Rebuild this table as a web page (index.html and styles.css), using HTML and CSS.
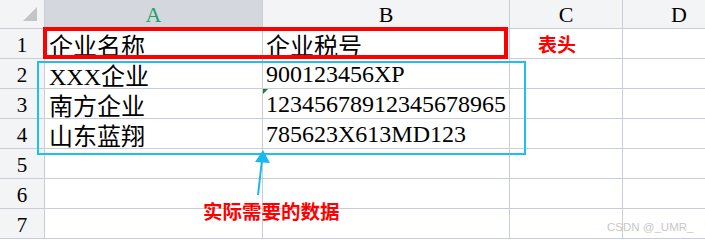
FILE: index.html
```html
<!DOCTYPE html>
<html lang="zh-CN">
<head>
<meta charset="utf-8">
<title>Sheet</title>
<link rel="stylesheet" href="styles.css">
</head>
<body>
<div class="sheet">
  <div class="grid">
    <div class="corner"><span class="tri"></span></div>
    <div class="colh sel">A</div>
    <div class="colh">B</div>
    <div class="colh">C</div>
    <div class="colh">D</div>

    <div class="rowh">1</div>
    <div class="cell">企业名称</div>
    <div class="cell">企业税号</div>
    <div class="cell"><span class="note-head">表头</span></div>
    <div class="cell"></div>

    <div class="rowh">2</div>
    <div class="cell">XXX企业</div>
    <div class="cell">900123456XP</div>
    <div class="cell"></div>
    <div class="cell"></div>

    <div class="rowh">3</div>
    <div class="cell">南方企业</div>
    <div class="cell flag">12345678912345678965</div>
    <div class="cell"></div>
    <div class="cell"></div>

    <div class="rowh">4</div>
    <div class="cell">山东蓝翔</div>
    <div class="cell">785623X613MD123</div>
    <div class="cell"></div>
    <div class="cell"></div>

    <div class="rowh">5</div>
    <div class="cell"></div>
    <div class="cell"></div>
    <div class="cell"></div>
    <div class="cell"></div>

    <div class="rowh">6</div>
    <div class="cell"></div>
    <div class="cell"></div>
    <div class="cell"></div>
    <div class="cell"></div>

    <div class="rowh">7</div>
    <div class="cell"></div>
    <div class="cell"></div>
    <div class="cell"></div>
    <div class="cell"></div>
  </div>

  <div class="box-red"></div>
  <div class="box-blue"></div>
  <svg class="arrow" width="30" height="50" viewBox="0 0 30 50">
    <line x1="6" y1="45" x2="10" y2="10" stroke="#1ab8ee" stroke-width="2"/>
    <polygon points="11,0 18,13 3,12" fill="#1ab8ee"/>
  </svg>
  <div class="note-data">实际需要的数据</div>
  <div class="watermark">CSDN @_UMR_</div>
</div>
</body>
</html>
```

FILE: styles.css
```css
html, body {
  margin: 0;
  padding: 0;
  background: #ffffff;
}

.sheet {
  position: relative;
  width: 705px;
  height: 240px;
  overflow: hidden;
  font-family: "Liberation Serif", "Noto Sans CJK SC", serif;
}

.grid {
  display: grid;
  grid-template-columns: 45px 218px 247px 113px 113px;
  grid-template-rows: 29px repeat(7, 30px);
}

.grid > div {
  box-sizing: border-box;
  border-right: 1px solid #c8cdd8;
  border-bottom: 1px solid #c8cdd8;
}

.corner {
  position: relative;
  background: #f3f4f6;
}

.tri {
  position: absolute;
  left: 23px;
  top: 7px;
  width: 0;
  height: 0;
  border-left: 14px solid transparent;
  border-bottom: 14px solid #c3c5c9;
}

.colh {
  background: #f3f4f6;
  display: flex;
  align-items: center;
  justify-content: center;
  font-size: 22px;
  color: #000;
  padding-top: 2px;
}

.colh.sel {
  background: #d4d7dd;
  color: #21a366;
  border-bottom: 2px solid #21a366;
}

.rowh {
  background: #f3f4f6;
  display: flex;
  align-items: center;
  justify-content: center;
  font-size: 21px;
  color: #000;
  padding-top: 3px;
  border-bottom-color: #d6dae2;
}

.cell {
  display: flex;
  align-items: center;
  padding-left: 4px;
  padding-top: 2px;
  font-size: 24px;
  color: #000;
  white-space: nowrap;
  overflow: visible;
  position: relative;
}

.grid > .cell:nth-child(5n+3) {
  padding-left: 3px;
}

.flag::before {
  content: "";
  position: absolute;
  left: 0;
  top: 0;
  width: 0;
  height: 0;
  border-top: 5px solid #1d7a2f;
  border-right: 5px solid transparent;
}

.note-head {
  margin-left: 24px;
  color: #ff0000;
  font-weight: bold;
  font-size: 19px;
  padding-bottom: 2px;
}

.box-red {
  position: absolute;
  left: 43px;
  top: 27px;
  width: 465px;
  height: 32px;
  box-sizing: border-box;
  border: 4px solid #ff0000;
}

.box-blue {
  position: absolute;
  left: 37px;
  top: 61px;
  width: 489px;
  height: 94px;
  box-sizing: border-box;
  border: 2px solid #1ec0f2;
}

.arrow {
  position: absolute;
  left: 252px;
  top: 150px;
}

.note-data {
  position: absolute;
  left: 203px;
  top: 201px;
  color: #ff0000;
  font-weight: bold;
  font-size: 19.5px;
  line-height: 24px;
  white-space: nowrap;
}

.watermark {
  position: absolute;
  left: 607px;
  top: 220px;
  color: #c8c8c8;
  font-family: "Liberation Sans", sans-serif;
  font-size: 11.5px;
  line-height: 14px;
  white-space: nowrap;
}
```
